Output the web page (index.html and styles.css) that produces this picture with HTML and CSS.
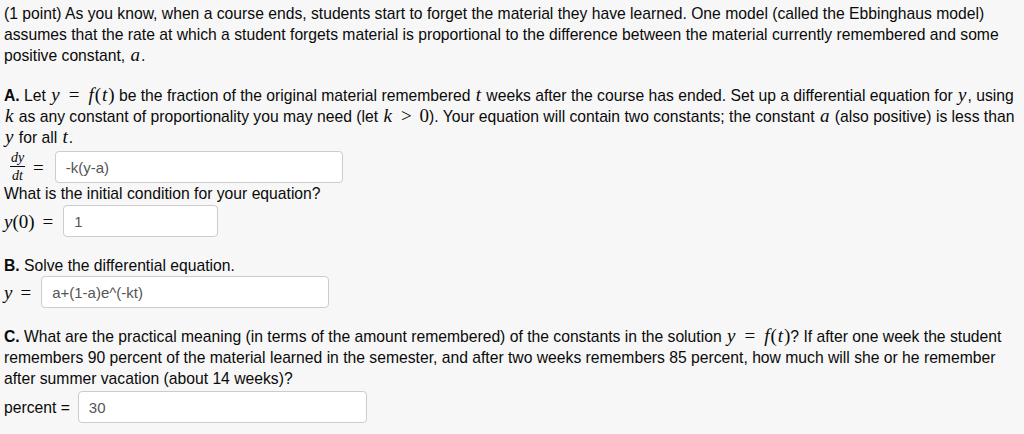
FILE: index.html
```html
<!DOCTYPE html>
<html>
<head>
<meta charset="utf-8">
<link rel="stylesheet" href="styles.css">
</head>
<body>
<div class="page">
  <p class="para">(1 point) As you know, when a course ends, students start to forget the material they have learned. One model (called the Ebbinghaus model) assumes that the rate at which a student forgets material is proportional to the difference between the material currently remembered and some positive constant, <span class="m">a</span>.</p>

  <p class="para sec"><b>A.</b> Let <span class="m">y</span><span class="mr rel">=</span><span class="m">f</span><span class="mr">(</span><span class="m">t</span><span class="mr">)</span> be the fraction of the original material remembered <span class="m">t</span> weeks after the course has ended. Set up a differential equation for <span class="m">y</span>, using <span class="m">k</span> as any constant of proportionality you may need (let <span class="m">k</span><span class="mr rel">&gt;</span><span class="mr">0</span>). Your equation will contain two constants; the constant <span class="m">a</span> (also positive) is less than <span class="m">y</span> for all <span class="m">t</span>.</p>

  <div class="row r1">
    <span class="frac"><span class="num">dy</span><span class="den">dt</span></span>
    <span class="mr eq">=</span>
    <div class="box w287">-k(y-a)</div>
  </div>
  <p class="line">What is the initial condition for your equation?</p>
  <div class="row r2">
    <span class="lab"><span class="m">y</span><span class="mr">(0)</span><span class="mr rel">=</span></span>
    <div class="box w154">1</div>
  </div>

  <p class="line sec2"><b>B.</b> Solve the differential equation.</p>
  <div class="row r3">
    <span class="lab"><span class="m">y</span><span class="mr rel">=</span></span>
    <div class="box w287">a+(1-a)e^(-kt)</div>
  </div>

  <p class="para sec2"><b>C.</b> What are the practical meaning (in terms of the amount remembered) of the constants in the solution <span class="m">y</span><span class="mr rel">=</span><span class="m">f</span><span class="mr">(</span><span class="m">t</span><span class="mr">)</span>? If after one week the student remembers 90 percent of the material learned in the semester, and after two weeks remembers 85 percent, how much will she or he remember after summer vacation (about 14 weeks)?</p>
  <div class="row r4">
    <span class="plab">percent =</span>
    <div class="box w288">30</div>
  </div>
</div>
</body>
</html>
```

FILE: styles.css
```css
html, body {
  margin: 0;
  padding: 0;
  background: #f7f7f7;
}
.page {
  padding: 3px 4px 0 4px;
  font-family: "Liberation Sans", Arial, sans-serif;
  font-size: 15.7px;
  line-height: 21px;
  color: #0a0a0a;
}
.para, .line {
  margin: 0;
}
.sec {
  margin-top: 19px;
}
.sec2 {
  margin-top: 18px;
}
.m {
  font-family: "Liberation Serif", "Times New Roman", serif;
  font-style: italic;
  font-size: 19px;
  line-height: 1;
  padding: 0 1px;
}
.mr {
  font-family: "Liberation Serif", "Times New Roman", serif;
  font-size: 19px;
  line-height: 1;
}
.rel {
  margin: 0 8px;
}
.row {
  display: flex;
  align-items: center;
  height: 32px;
}
.r1 { margin-top: 3px; }
.r2 { margin-top: 1px; }
.r3 { margin-top: 0; }
.r4 { margin-top: 2px; }
.frac {
  display: inline-flex;
  flex-direction: column;
  align-items: center;
  font-family: "Liberation Serif", "Times New Roman", serif;
  font-style: italic;
  font-size: 14px;
  line-height: 12px;
  margin-left: 5px;
  width: 17px;
}
.num {
  border-bottom: 1px solid #0a0a0a;
  padding: 0 1px 2px;
}
.den {
  padding-top: 3px;
}
.eq {
  margin: 0 11px 0 7px;
}
.lab {
  display: inline-flex;
  align-items: baseline;
  margin-right: 10px;
  white-space: nowrap;
}
.lab .m {
  padding: 0;
}
.lab .rel {
  margin-right: 0;
}
.plab {
  margin-right: 8px;
}
.box {
  box-sizing: border-box;
  height: 32px;
  background: #ffffff;
  border: 1px solid #cccccc;
  border-radius: 4px;
  padding: 0 10px;
  display: flex;
  align-items: center;
  font-size: 15px;
  color: #555555;
}
.w287 { width: 288px; }
.w154 { width: 155px; }
.w288 { width: 289px; }
```
